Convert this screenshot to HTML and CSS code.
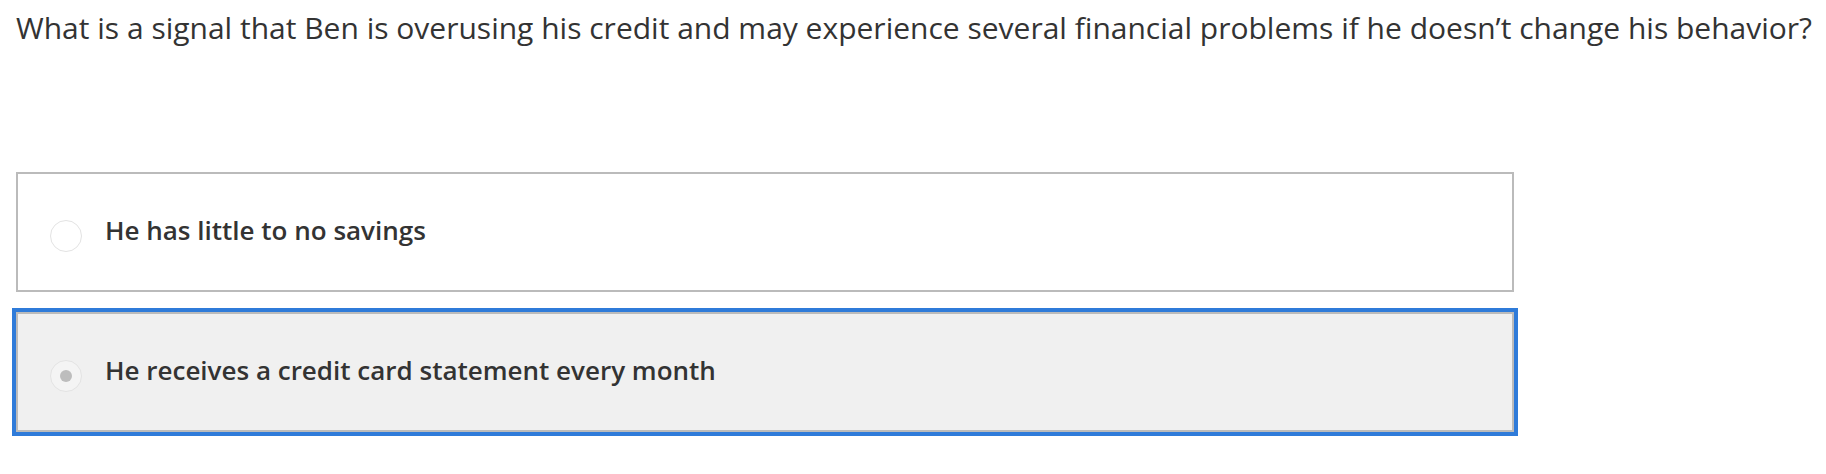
FILE: index.html
```html
<!DOCTYPE html>
<html lang="en">
<head>
    <meta charset="UTF-8">
    <meta name="viewport" content="width=device-width, initial-scale=1.0">
    <title>Question</title>
    <link rel="stylesheet" href="styles.css">
</head>
<body>
    <div class="question">
        <p class="question-text">What is a signal that Ben is overusing his credit and may experience several financial problems if he doesn’t change his behavior?</p>
        <div class="answers">
            <label class="answer">
                <span class="radio"></span>
                <span class="answer-text">He has little to no savings</span>
            </label>
            <label class="answer selected">
                <span class="radio"></span>
                <span class="answer-text">He receives a credit card statement every month</span>
            </label>
        </div>
    </div>
</body>
</html>
```

FILE: styles.css
```css
body {
    margin: 0;
    min-height: 474px;
    background-color: white;
    font-family: "Open Sans", Arial, sans-serif;
    color: #333333;
}
.question {
    padding: 0 16px 40px;
}
.question-text {
    margin: 0;
    padding-top: 7px;
    font-size: 30px;
    line-height: 41px;
    white-space: nowrap;
}
.answers {
    display: flex;
    flex-direction: column;
    gap: 20px;
    margin-top: 124px;
    width: 1498px;
}
.answer {
    display: flex;
    align-items: center;
    height: 120px;
    box-sizing: border-box;
    padding: 0 32px;
    border: 2px solid #bbbbbb;
    background-color: white;
}
.answer.selected {
    background-color: #f0f0f0;
    box-shadow: 0 0 0 4px #2f7bd9;
}
.radio {
    display: flex;
    align-items: center;
    justify-content: center;
    width: 32px;
    height: 32px;
    margin-top: 8px;
    box-sizing: border-box;
    border: 1px solid #e3e3e3;
    border-radius: 50%;
    background-color: white;
}
.selected .radio {
    background-color: #f4f4f4;
}
.selected .radio::after {
    content: "";
    width: 12px;
    height: 12px;
    border-radius: 50%;
    background-color: #bdbdbd;
}
.answer-text {
    margin-left: 23px;
    margin-bottom: 4px;
    font-size: 26px;
    font-weight: 600;
}
```
